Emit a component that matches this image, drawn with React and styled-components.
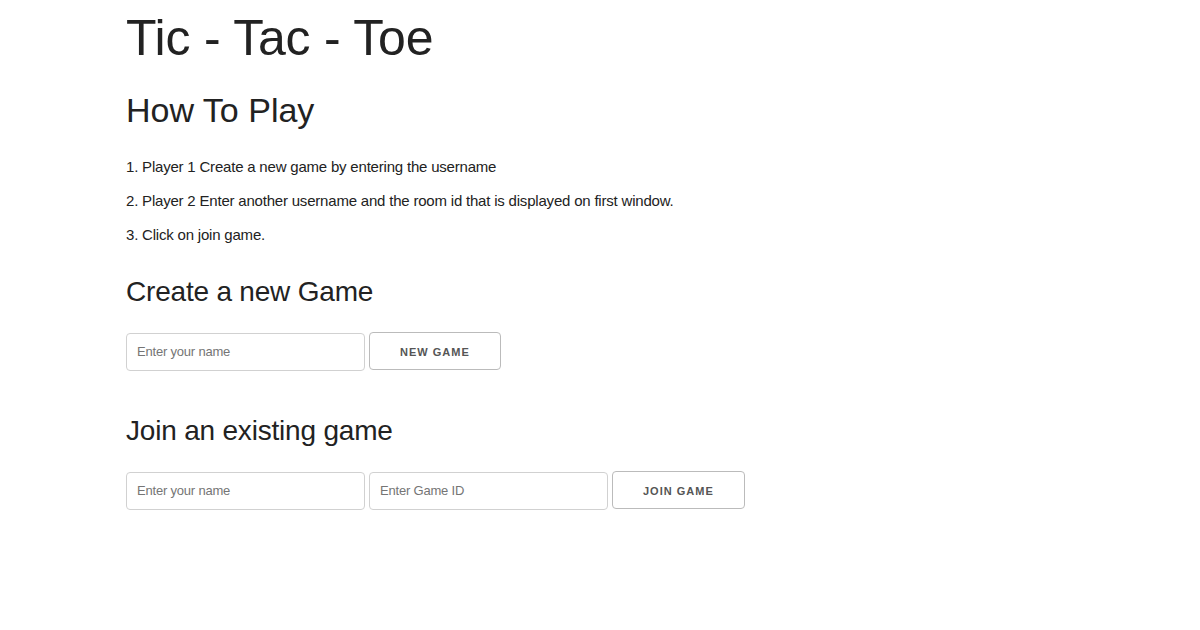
import styled, { createGlobalStyle } from "styled-components";

const GlobalStyle = createGlobalStyle`
  body {
    margin: 8px;
    background: #fff;
    color: #222;
    font-family: "Liberation Sans", Arial, sans-serif;
    font-size: 15px;
  }
`;

const Container = styled.div`
  max-width: 948px;
  margin: 0 auto;
`;

const Title = styled.h1`
  margin: 0 0 20px;
  font-size: 50px;
  line-height: 1.2;
  font-weight: 300;
  letter-spacing: -0.2px;
`;

const SubTitle = styled.h3`
  margin: 0 0 23px;
  font-size: 34px;
  line-height: 1.3;
  font-weight: 300;
`;

const SectionTitle = styled.h4`
  margin: ${(p) => (p.$first ? "26px" : "41px")} 0 22px;
  font-size: 28px;
  line-height: 1.35;
  font-weight: 300;
  letter-spacing: -0.2px;
`;

const Step = styled.p`
  margin: 0 0 10px;
  font-size: 15px;
  line-height: 24px;
  letter-spacing: -0.2px;
`;

const Row = styled.div`
  display: flex;
  align-items: flex-start;
  gap: 4px;
`;

const Input = styled.input`
  box-sizing: border-box;
  width: 239px;
  height: 38px;
  padding: 6px 10px;
  border: 1px solid #d1d1d1;
  border-radius: 4px;
  background: #fff;
  font-family: "Liberation Sans", Arial, sans-serif;
  font-size: 13px;
  letter-spacing: -0.2px;
  color: #222;
  outline: none;

  &::placeholder {
    color: #757575;
  }
`;

const Button = styled.button`
  box-sizing: border-box;
  height: 38px;
  margin-top: -1px;
  padding: 0 30px;
  border: 1px solid #bbb;
  border-radius: 4px;
  background: transparent;
  color: #555;
  font-family: "Liberation Sans", Arial, sans-serif;
  font-size: 11px;
  font-weight: 600;
  letter-spacing: 1px;
  line-height: 38px;
  text-transform: uppercase;
  cursor: pointer;
`;

const steps = [
  "1. Player 1 Create a new game by entering the username",
  "2. Player 2 Enter another username and the room id that is displayed on first window.",
  "3. Click on join game.",
];

export default function App() {
  return (
    <>
      <GlobalStyle />
      <Container>
        <Title>Tic - Tac - Toe</Title>
        <SubTitle>How To Play</SubTitle>
        {steps.map((s) => (
          <Step key={s}>{s}</Step>
        ))}
        <SectionTitle $first>Create a new Game</SectionTitle>
        <Row>
          <Input placeholder="Enter your name" />
          <Button>New Game</Button>
        </Row>
        <SectionTitle>Join an existing game</SectionTitle>
        <Row>
          <Input placeholder="Enter your name" />
          <Input placeholder="Enter Game ID" />
          <Button>Join Game</Button>
        </Row>
      </Container>
    </>
  );
}
